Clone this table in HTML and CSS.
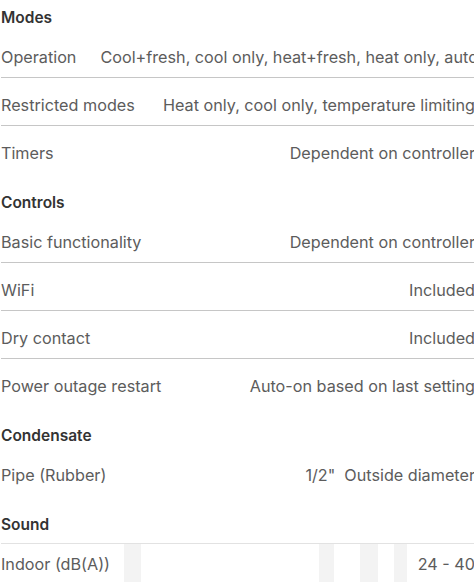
FILE: index.html
```html
<!DOCTYPE html>
<html lang="en">
<head>
<meta charset="utf-8">
<title>Specifications</title>
<link rel="stylesheet" href="styles.css">
</head>
<body>
<div class="specs">
  <section class="group group-first">
    <h3 class="group-title">Modes</h3>
    <div class="row"><span class="label">Operation</span><span class="value">Cool+fresh, cool only, heat+fresh, heat only, auto</span></div>
    <div class="row"><span class="label">Restricted modes</span><span class="value">Heat only, cool only, temperature limiting</span></div>
    <div class="row"><span class="label">Timers</span><span class="value">Dependent on controller</span></div>
  </section>
  <section class="group">
    <h3 class="group-title">Controls</h3>
    <div class="row"><span class="label">Basic functionality</span><span class="value">Dependent on controller</span></div>
    <div class="row"><span class="label">WiFi</span><span class="value">Included</span></div>
    <div class="row"><span class="label">Dry contact</span><span class="value">Included</span></div>
    <div class="row"><span class="label">Power outage restart</span><span class="value">Auto-on based on last setting</span></div>
  </section>
  <section class="group">
    <h3 class="group-title">Condensate</h3>
    <div class="row"><span class="label">Pipe (Rubber)</span><span class="value">1/2"&nbsp; Outside diameter</span></div>
  </section>
  <section class="group group-sound">
    <h3 class="group-title">Sound</h3>
    <div class="row row-loading">
      <span class="label">Indoor (dB(A))</span><span class="value">24 - 40</span>
      <span class="shimmer s1"></span>
      <span class="shimmer s2"></span>
      <span class="shimmer s3"></span>
      <span class="shimmer s4"></span>
    </div>
  </section>
</div>
</body>
</html>
```

FILE: styles.css
```css
html, body {
  margin: 0;
  padding: 0;
  background: #ffffff;
  overflow: hidden;
}

body {
  font-family: Inter, "Open Sans", sans-serif;
  font-size: 16.2px;
  color: #5c5c5c;
}

.specs {
  width: 475px;
  padding-left: 1px;
  box-sizing: border-box;
}

.group {
  padding-top: 18px;
}

.group-first {
  padding-top: 6px;
}

.group-title {
  margin: 0;
  font-size: 15.5px;
  font-weight: 600;
  line-height: 24px;
  color: #333333;
}

.row {
  position: relative;
  display: flex;
  justify-content: space-between;
  gap: 24px;
  padding: 15px 0 8px;
  line-height: 24px;
  white-space: nowrap;
  border-bottom: 1px solid #c6c6c6;
}

.row:last-child {
  border-bottom: none;
}

.label,
.value {
  flex: none;
}

.group-sound .group-title {
  padding-bottom: 6px;
  border-bottom: 1px solid #e2e2e2;
}

.row-loading {
  padding: 8px 0 6px;
}

.shimmer {
  position: absolute;
  top: 0;
  bottom: -4px;
  background: #f3f3f3;
}

.s1 { left: 123px; width: 17px; }
.s2 { left: 318px; width: 15px; }
.s3 { left: 359px; width: 18px; }
.s4 { left: 393px; width: 13px; }

.row-loading .label,
.row-loading .value {
  position: relative;
  z-index: 1;
}
```
